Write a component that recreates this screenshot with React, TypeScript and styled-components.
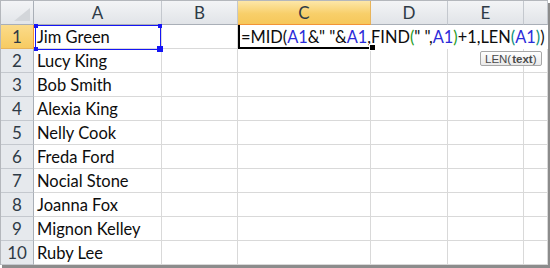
import React from 'react';
import styled, { createGlobalStyle, css } from 'styled-components';

const GlobalStyle = createGlobalStyle`
  html, body {
    margin: 0;
    padding: 0;
    background: #ffffff;
  }
  body {
    width: 550px;
    height: 268px;
    overflow: hidden;
    font-family: Lato, "Open Sans", "Liberation Sans", sans-serif;
  }
`;

const COLUMNS = ['A', 'B', 'C', 'D', 'E', ''];
const ACTIVE_COLUMN = 'C';

const NAMES = [
  'Jim Green',
  'Lucy King',
  'Bob Smith',
  'Alexia King',
  'Nelly Cook',
  'Freda Ford',
  'Nocial Stone',
  'Joanna Fox',
  'Mignon Kelley',
  'Ruby Lee',
];

const SFrame = styled.div`
  width: 548px;
  height: 265px;
  box-sizing: border-box;
  border-top: 1px solid #b4b7bc;
  border-left: 1px solid #b4b7bc;
  box-shadow: 2px 3px 0 #8c8c8c;
  position: relative;
  overflow: hidden;
  background: #ffffff;
`;

const SGrid = styled.div`
  display: grid;
  grid-template-columns: 33px 128px 76px 133px 77px 76px 1fr;
  grid-auto-rows: 24px;
`;

const headerBase = css`
  box-sizing: border-box;
  display: flex;
  align-items: center;
  justify-content: center;
  font-size: 17px;
  color: #2e3a46;
`;

const SCorner = styled.div`
  ${headerBase};
  background: linear-gradient(#f3f4f6, #e2e5e9);
  border-right: 1px solid #a9afb7;
  border-bottom: 1px solid #a9afb7;
  position: relative;

  &::after {
    content: '';
    position: absolute;
    right: 3px;
    bottom: 3px;
    width: 0;
    height: 0;
    border-left: 16px solid transparent;
    border-bottom: 13px solid #d3d6da;
  }
`;

const SColumnHeader = styled.div<{ $active?: boolean }>`
  ${headerBase};
  background: ${({ $active }) => ($active
    ? 'linear-gradient(#fde7a8, #f8cf6a 55%, #f6c75a)'
    : 'linear-gradient(#f3f4f6, #e1e4e8)')};
  border-right: 1px solid ${({ $active }) => ($active ? '#e8b45a' : '#c4c8ce')};
  border-bottom: 1px solid ${({ $active }) => ($active ? '#f29436' : '#a9afb7')};
`;

const SRowHeader = styled.div<{ $active?: boolean }>`
  ${headerBase};
  background: ${({ $active }) => ($active
    ? 'linear-gradient(#fbdb8a, #f7cb62)'
    : '#e6e9ed')};
  border-right: 1px solid ${({ $active }) => ($active ? '#f29436' : '#a9afb7')};
  border-bottom: 1px solid ${({ $active }) => ($active ? '#e8b45a' : '#c4c8ce')};
`;

const SCell = styled.div`
  box-sizing: border-box;
  border-right: 1px solid #d9d9d9;
  border-bottom: 1px solid #d9d9d9;
  padding: 0 3px;
  display: flex;
  align-items: center;
  font-size: 16.5px;
  color: #0d0d0d;
  white-space: nowrap;
`;

const SEditCell = styled.div`
  grid-column: span 4;
  box-sizing: border-box;
  position: relative;
  border-left: 2px solid #000000;
  padding: 0 0 2px 1px;
  display: flex;
  align-items: center;
  font-size: 16.4px;
  color: #0d0d0d;
  white-space: nowrap;

  &::before {
    content: '';
    position: absolute;
    left: -2px;
    bottom: 0;
    width: 133px;
    height: 2px;
    background: #000000;
  }

  &::after {
    content: '';
    position: absolute;
    left: 129px;
    bottom: -2px;
    width: 5px;
    height: 5px;
    background: #000000;
    border: 1px solid #ffffff;
  }
`;

const SRef = styled.span`
  color: #2b2bd9;
`;

const SParen = styled.span<{ $tone: 'green' | 'teal' }>`
  color: ${({ $tone }) => ($tone === 'green' ? '#1f9c24' : '#0a8f7a')};
`;

const SSelection = styled.div`
  position: absolute;
  left: 34px;
  top: 24px;
  width: 124px;
  height: 23px;
  border: 1px solid #1515f5;
  pointer-events: none;
`;

const SHandle = styled.span<{ $x: 'left' | 'right'; $y: 'top' | 'bottom'; $big?: boolean }>`
  position: absolute;
  width: ${({ $big }) => ($big ? 6 : 4)}px;
  height: ${({ $big }) => ($big ? 6 : 4)}px;
  background: #1515f5;
  ${({ $x, $big }) => ($x === 'left' ? 'left: -2px;' : `right: ${$big ? -3 : -2}px;`)}
  ${({ $y, $big }) => ($y === 'top' ? 'top: -2px;' : `bottom: ${$big ? -3 : -2}px;`)}
`;

const STooltip = styled.div`
  position: absolute;
  left: 479px;
  top: 50px;
  height: 15px;
  padding: 0 4px;
  box-sizing: border-box;
  display: flex;
  align-items: center;
  border: 1px solid #a7a7a7;
  border-radius: 2px;
  background: linear-gradient(#ffffff, #e9e9e9);
  font-family: "Liberation Sans", Arial, sans-serif;
  font-size: 11.5px;
  color: #4a4a4a;

  b {
    font-weight: 700;
    margin-left: 1px;
  }
`;

function Formula() {
  return (
    <>
      =MID(
      <SRef>A1</SRef>
      &amp;&quot; &quot;&amp;
      <SRef>A1</SRef>
      ,FIND
      <SParen $tone="green">(</SParen>
      &quot; &quot;,
      <SRef>A1</SRef>
      <SParen $tone="green">)</SParen>
      +1,LEN
      <SParen $tone="teal">(</SParen>
      <SRef>A1</SRef>
      <SParen $tone="teal">)</SParen>
      )
    </>
  );
}

export default function App() {
  return (
    <>
      <GlobalStyle />
      <SFrame>
        <SGrid>
          <SCorner />
          {COLUMNS.map((col, i) => (
            <SColumnHeader key={`h${i}`} $active={col === ACTIVE_COLUMN}>{col}</SColumnHeader>
          ))}

          {NAMES.map((name, r) => (
            r === 0 ? (
              <React.Fragment key={name}>
                <SRowHeader $active>1</SRowHeader>
                <SCell>{name}</SCell>
                <SCell />
                <SEditCell><Formula /></SEditCell>
              </React.Fragment>
            ) : (
              <React.Fragment key={name}>
                <SRowHeader>{r + 1}</SRowHeader>
                <SCell>{name}</SCell>
                {COLUMNS.slice(1).map((col) => <SCell key={`${name}-${col}`} />)}
              </React.Fragment>
            )
          ))}
        </SGrid>

        <SSelection>
          <SHandle $x="left" $y="top" />
          <SHandle $x="right" $y="top" />
          <SHandle $x="left" $y="bottom" />
          <SHandle $x="right" $y="bottom" $big />
        </SSelection>

        <STooltip>
          LEN(<b>text</b>)
        </STooltip>
      </SFrame>
    </>
  );
}
